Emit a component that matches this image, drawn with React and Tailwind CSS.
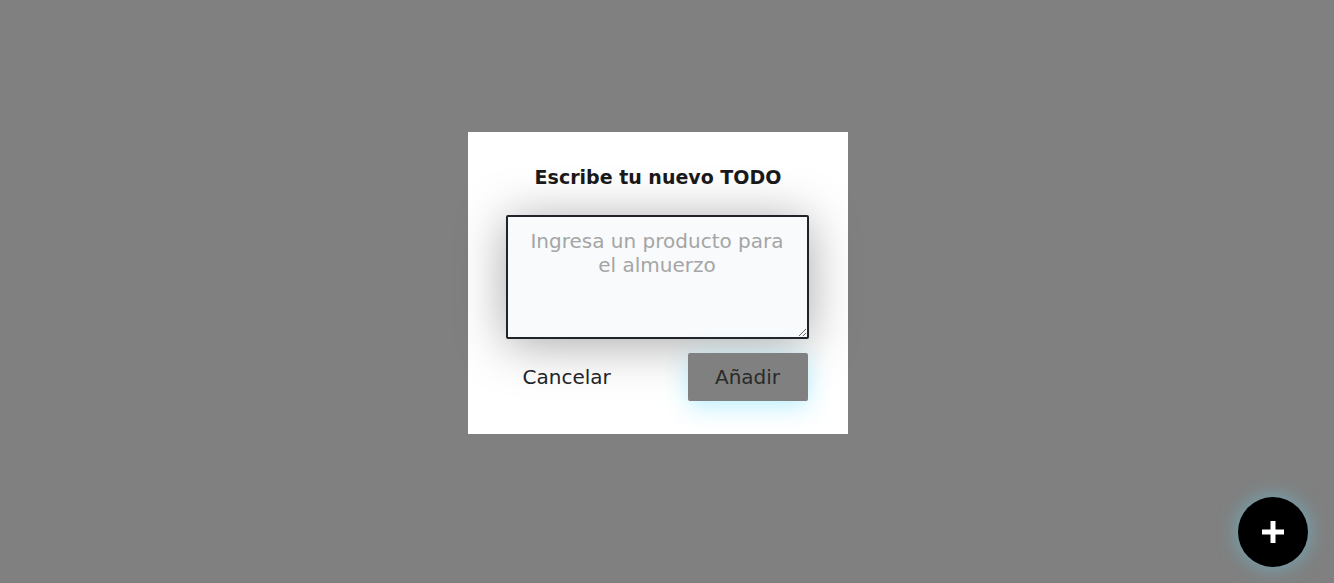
import React from 'react';

const App = () => {
  return (
    <div className="relative h-[583px] w-full overflow-hidden bg-[#808080] font-['DejaVu_Sans',sans-serif]">
      <div className="flex h-full justify-center pr-[18px] pt-[132px]">
        <form className="flex h-[302px] w-[380px] flex-col items-center bg-white">
          <h2 className="mt-[33px] text-[19px] font-bold leading-6 text-[#1a1a1a]">Escribe tu nuevo TODO</h2>
          <textarea
            className="mr-[2px] mt-[26px] h-[124px] w-[303px] resize-y rounded-[2px] border-2 border-[#202329] bg-[#f8fafc] px-3 py-3 text-center text-[20px] leading-6 text-[#333] shadow-[0_5px_50px_rgba(0,0,0,0.35)] outline-none placeholder:text-[#a5a5a5]"
            placeholder="Ingresa un producto para el almuerzo"
          />
          <div className="mr-[2px] mt-[14px] flex w-[303px] items-center justify-between">
            <button type="button" className="ml-[17px] text-[20px] text-[#202329]">Cancelar</button>
            <button
              type="button"
              className="mr-[1px] h-[48px] w-[120px] rounded-[2px] bg-[#808080] text-[20px] text-[#2a2a2a] shadow-[0_5px_25px_rgba(97,218,250,0.45)]"
            >
              Añadir
            </button>
          </div>
        </form>
      </div>
      <button
        type="button"
        className="absolute bottom-[16px] right-[26px] flex h-[70px] w-[70px] items-center justify-center rounded-full bg-black shadow-[0_0_20px_rgba(97,218,250,0.5)]"
      >
        <svg width="26" height="26" viewBox="0 0 26 26">
          <path d="M13 2v22M2 13h22" stroke="white" strokeWidth="5" />
        </svg>
      </button>
    </div>
  );
};

export default App;
